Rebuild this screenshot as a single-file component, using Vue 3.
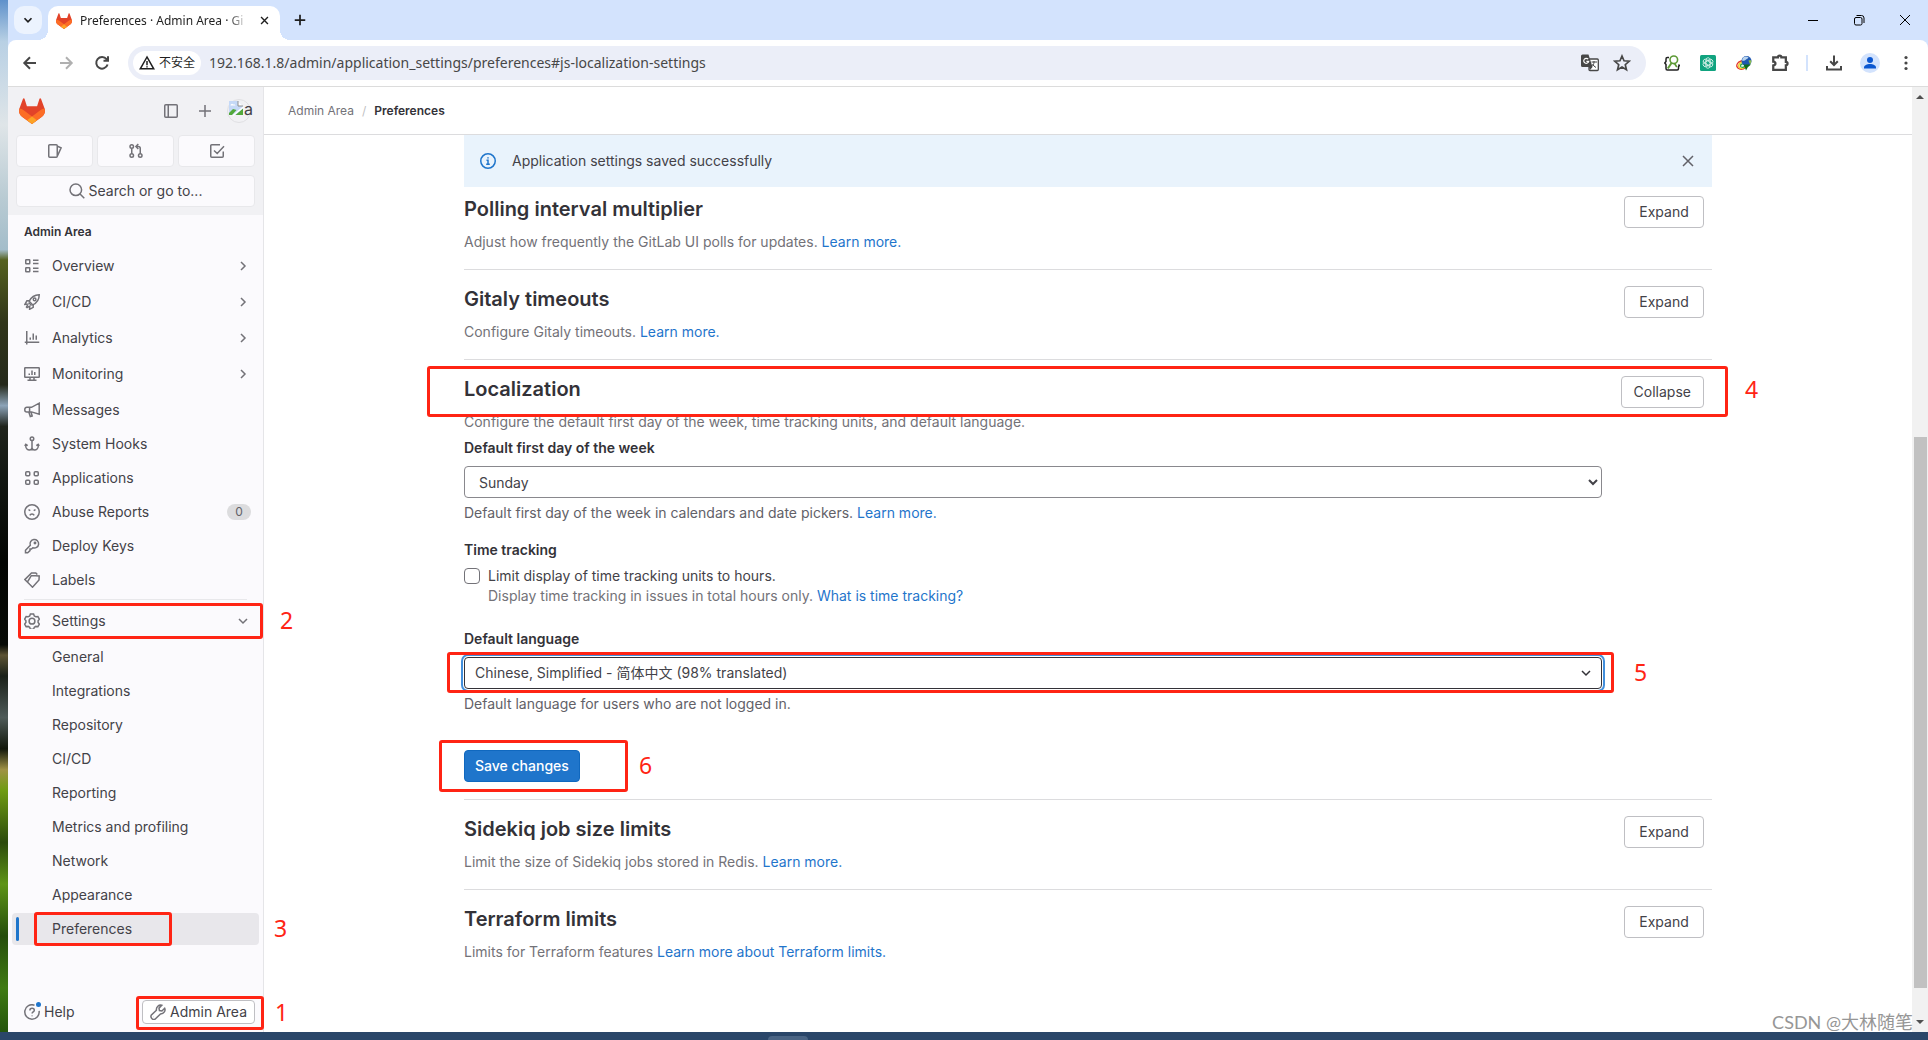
<script setup>
/**
 * Vendor
 */
import { ref } from "vue"

const icons = {
	overview: `<rect x="1.75" y="1.75" width="4" height="4" rx=".5"/><rect x="1.75" y="9.75" width="4" height="4" rx=".5"/><path d="M9 2.25h5.5M9 5.5h5.5M9 10.25h5.5M9 13.5h5.5"/>`,
	rocket: `<path d="M5.2 7.2C7 3.6 10.2 1 15.2.8c.1 5-2.6 8.3-6.4 10.1z"/><circle cx="10.6" cy="5.4" r="1.3"/><path d="M5.4 6.8H2.9L.9 10.4l3.7-.3M9.2 10.8v2.5l-3.6 2 .2-3.8M4.6 8.5l3 3M3.9 10.4l-1.4 2.600.6.6 2.7-1.5"/>`,
	chart: `<path d="M2.75 1v13.5M.75 12.25h14.5M6.25 9.8V7.5M9.25 9.8V3.5M12.25 9.8V5.5"/>`,
	monitor: `<rect x=".75" y="1.75" width="14.5" height="9.5" rx=".5"/><path d="M5.25 9V7.5M8 9V4.5M10.75 9V6M6 11.5v2.2M10 11.5v2.2M3.5 14.25h9"/>`,
	bullhorn: `<path d="M15.2 1.2v11L7.5 9.9H2.8a2 2 0 0 1-2-2v-.6a2 2 0 0 1 2-2h4.7zM5.6 5.4v4.4M4.8 10l1.5 4.5 1.9-.6-1.2-3.8"/>`,
	hook: `<circle cx="8" cy="2.75" r="1.75"/><path d="M8 4.5v10M1.75 8.5v1.6c0 2.4 1.9 3.9 3.6 3.9 1.5 0 2.65-1 2.65-2.5 0 1.5 1.15 2.5 2.65 2.5 1.7 0 3.6-1.5 3.6-3.9V8.5M.8 10l1-1.7 1.9 1.4M15.2 10l-1-1.7-1.9 1.4"/>`,
	apps: `<rect x="1.75" y="1.75" width="4" height="4" rx="1"/><rect x="10.25" y="1.75" width="4" height="4" rx="1"/><rect x="1.75" y="10.25" width="4" height="4" rx="1"/><rect x="10.25" y="10.25" width="4" height="4" rx="1"/>`,
	sad: `<circle cx="8" cy="8" r="7.25"/><path d="M5.8 11.3c.9-1.7 3.5-1.7 4.4 0M4.5 5.7l1.8.9M11.5 5.7l-1.8.9"/>`,
	key: `<path d="M6.3 7.3a4.3 4.3 0 1 1 2.5 2.5L7.5 11H6v1.6l-2.3 2.1H1.5v-2.5z"/><circle cx="11" cy="5" r=".7"/>`,
	labels: `<path d="M7.3 3.7h4.2l3.7.3-.2 4-6.5 7.2L3.4 10zM5.6 12.2.8 7.6 7.5.9h4.3l1.5 1.6M11.9 6.8h.1"/>`,
	settings: `<path d="M6.4 1h3.2l.7 1.9 1.6.9 2-.3 1.4 2.600-1.200 1.600v1.800l1.200 1.600-1.400 2.600-2-.3-1.600.9-.7 1.900H6.400l-.7-1.900-1.600-.9-2 .3L.7 11.100l1.200-1.600V7.700L.7 6.100l1.400-2.600 2 .3 1.600-.9z"/><circle cx="8" cy="8.200" r="2.900"/>`,
	help: `<path d="M10.5 1.2A7.2 7.2 0 1 0 15.1 6.8M5.9 6.4c0-1.3 1-2.1 2.2-2.1s2.2.8 2.2 2c0 1.6-2.2 1.7-2.2 3.3M8.1 11.4v.9"/>`,
	wrench: `<path d="M11.8 1.3 9 4.1l.4 2.5 2.5.4 2.8-2.8c1 2.3-.5 5.8-4.2 5.8L5 15.2c-1.6 1.3-5-1.2-3.8-3.9L6.4 6.2c-.4-3.3 2.4-5.7 5.4-4.9zM3.3 12.7h.2"/>`,
	panel: `<rect x="1.75" y="1.75" width="12.5" height="12.5" rx="1"/><path d="M5.25 2v12"/>`,
	plus: `<path d="M8 2v12M2 8h12"/>`,
	issues: `<path d="M2.75 1.75h6.5a1 1 0 0 1 1 1v10.5a1 1 0 0 1-1 1h-6.5a1 1 0 0 1-1-1V2.75a1 1 0 0 1 1-1zM10.5 3.3l3.6 1.5-3.8 8.5"/>`,
	merge: `<circle cx="3.75" cy="3.5" r="1.75"/><circle cx="3.75" cy="12.5" r="1.75"/><circle cx="12.25" cy="12.5" r="1.75"/><path d="M3.75 5.3v5.4M12.25 10.7V5.5a2 2 0 0 0-2-2H8.5M10.3 1 7.9 3.5l2.4 2.5"/>`,
	todo: `<path d="M14.25 8.5v4.7a1 1 0 0 1-1 1H2.75a1 1 0 0 1-1-1V2.75a1 1 0 0 1 1-1H11M5 7.5l3.2 3L15 3.3"/>`,
	search: `<circle cx="6.8" cy="6.8" r="5.8"/><path d="m11 11 4.3 4.3"/>`,
	right: `<path d="m6 4 4 4-4 4"/>`,
	down: `<path d="m4 6 4 4 4-4"/>`,
	close: `<path d="m3 3 10 10M13 3 3 13"/>`,
	info: `<circle cx="8" cy="8" r="7.25"/><path d="M6.5 7.25H8v4M6.2 11.25h3.6M8 4.2v1.3"/>`,
	back: `<path d="M14 8H2.5M8 2.3 2.3 8 8 13.7"/>`,
	forward: `<path d="M2 8h11.5M8 2.3 13.7 8 8 13.7"/>`,
	reload: `<path d="M13.6 9.5A5.8 5.8 0 1 1 12.6 4.2L14 5.6M14 1.3v4.5H9.5"/>`,
	warning: `<path d="M8 2 1.3 13.8h13.4zM8 6v4.2M8 11.3v1.2"/>`,
	star: `<path d="m8 1.8 1.8 4.2 4.7.4-3.6 3.1 1.1 4.5L8 11.6 4 14l1.1-4.5L1.5 6.4 6.2 6z"/>`,
	puzzle: `<path d="M2 3h4.200c0-2 3-2 3 0H13.200v4c2 0 2 3 0 3v4.200H2v-4c2.600-.3 2.600-3.100 0-3.400z"/>`,
	download: `<path d="M8 .5v9M4.2 6.2 8 10l3.8-3.8M1 11v3.5h14V11"/>`,
}

const menu = [
	{ text: "Overview", icon: "overview", group: true },
	{ text: "CI/CD", icon: "rocket", group: true },
	{ text: "Analytics", icon: "chart", group: true },
	{ text: "Monitoring", icon: "monitor", group: true },
	{ text: "Messages", icon: "bullhorn" },
	{ text: "System Hooks", icon: "hook" },
	{ text: "Applications", icon: "apps" },
	{ text: "Abuse Reports", icon: "sad", count: "0" },
	{ text: "Deploy Keys", icon: "key" },
	{ text: "Labels", icon: "labels" },
]

const settings = [
	"General",
	"Integrations",
	"Repository",
	"CI/CD",
	"Reporting",
	"Metrics and profiling",
	"Network",
	"Appearance",
	"Preferences",
]

const sectionsBefore = [
	{
		title: "Polling interval multiplier",
		text: "Adjust how frequently the GitLab UI polls for updates.",
		link: "Learn more.",
	},
	{ title: "Gitaly timeouts", text: "Configure Gitaly timeouts.", link: "Learn more." },
]

const sectionsAfter = [
	{
		title: "Sidekiq job size limits",
		text: "Limit the size of Sidekiq jobs stored in Redis.",
		link: "Learn more.",
	},
	{
		title: "Terraform limits",
		text: "Limits for Terraform features",
		link: "Learn more about Terraform limits.",
	},
]

const url = ref("192.168.1.8/admin/application_settings/preferences#js-localization-settings")
const weekday = ref("Sunday")
const language = ref("zh_CN")
const hoursOnly = ref(false)
</script>

<template>
	<div class="desktop">
		<div class="window">
			<div class="tabs">
				<button class="tab_search" aria-label="Search tabs">
					<svg class="icon" viewBox="0 0 16 16" v-html="icons.down" />
				</button>

				<div class="tab">
					<svg class="favicon" viewBox="0 0 24 24">
						<path fill="#e24329" d="m23.600 9.600-3.300-8.800c-.3-.7-1.200-.6-1.400 0L16.700 7.600H7.300L5.100.8C4.900.2 4 .1 3.700.8L.4 9.600c-1 2.900 0 6 2.400 7.800L12 24l9.200-6.600c2.400-1.800 3.400-4.900 2.400-7.800z" />
						<path fill="#fc6d26" d="M23.600 9.600c-1.700.3-3.300 1.100-4.600 2.100L12 17l-7-5.300C3.700 10.700 2.100 9.900.4 9.600c-1 2.900 0 6 2.400 7.800L12 24l9.200-6.600c2.400-1.800 3.400-4.900 2.400-7.800z" />
						<path fill="#fca326" d="m7.500 20.500 4.500 3.400 4.500-3.400L12 17z" />
					</svg>
					<span class="tab_title">Preferences · Admin Area · Gi</span>
					<button class="tab_close" aria-label="Close tab">
						<svg class="icon" viewBox="0 0 16 16" v-html="icons.close" />
					</button>
				</div>

				<button class="tab_new" aria-label="New tab">
					<svg class="icon" viewBox="0 0 16 16" v-html="icons.plus" />
				</button>

				<div class="window_controls">
					<button aria-label="Minimize">
						<svg viewBox="0 0 12 12"><path d="M1 6.500h10" /></svg>
					</button>
					<button aria-label="Restore">
						<svg viewBox="0 0 12 12">
							<rect x="1.500" y="3.500" width="7.500" height="7.500" rx="1.500" />
							<path d="M3.500 1.500h5a2.500 2.500 0 0 1 2.500 2.500v5" />
						</svg>
					</button>
					<button aria-label="Close">
						<svg viewBox="0 0 12 12"><path d="m1 1 10 10M11 1 1 11" /></svg>
					</button>
				</div>
			</div>

			<div class="toolbar">
				<button aria-label="Back"><svg class="icon bold" viewBox="0 0 16 16" v-html="icons.back" /></button>
				<button class="disabled" aria-label="Forward">
					<svg class="icon bold" viewBox="0 0 16 16" v-html="icons.forward" />
				</button>
				<button aria-label="Reload"><svg class="icon bold" viewBox="0 0 16 16" v-html="icons.reload" /></button>

				<div class="omnibox">
					<button class="chip">
						<svg class="icon" viewBox="0 0 16 16" v-html="icons.warning" />
						不安全
					</button>
					<input v-model="url" class="url" type="text" aria-label="Address" />
					<button class="translate" aria-label="Translate">
						<svg class="glyph" viewBox="0 0 18 18">
							<rect x="8" y="5" width="9.300" height="11.500" rx="1" fill="#fff" stroke="#474747" stroke-width="1.300" />
							<path d="M1.500.5h6L11.500 13h-10A1.500 1.500 0 0 1 0 11.500V2A1.500 1.500 0 0 1 1.500.5z" fill="#474747" />
							<path d="M8 13h3.500L9 16z" fill="#474747" />
							<path d="M7.200 5.200a2.500 2.500 0 1 0 .5 2.200H5.400" fill="none" stroke="#fff" stroke-width="1.200" />
							<path d="M10.500 8h5.500M13 7v1c0 2-1 3.500-2.200 4.500M11.500 10c.8 1.500 2 2.800 3.500 3.500" fill="none" stroke="#474747" />
						</svg>
					</button>
					<button aria-label="Bookmark"><svg class="icon glyph" viewBox="0 0 16 16" v-html="icons.star" /></button>
				</div>

				<div class="extensions">
					<button aria-label="Page search">
						<svg class="small_glyph" viewBox="0 0 16 16" fill="none">
							<path d="M5 2.500H3.300c-1 0-1.300.5-1.300 1.500v2.500L.8 8 2 9.500v4c0 1 .4 1.500 1.300 1.500h9.900c1 0 1.300-.5 1.300-1.500v-2l1-.8-1-1.200" stroke="#222" stroke-width="1.500" />
							<circle cx="9.800" cy="4.800" r="3.800" fill="#fff" stroke="#5d9a36" stroke-width="1.600" />
							<path d="M7.500 8 3.800 13.500" stroke="#5d9a36" stroke-width="2" />
							<path d="M10.500 8.500 12.800 12" stroke="#5d9a36" stroke-width="1.600" />
						</svg>
					</button>
					<button aria-label="Assistant">
						<svg class="small_glyph" viewBox="0 0 16 16" fill="none" stroke="#e6f6f1" stroke-width=".8">
							<rect width="16" height="16" rx="1.500" fill="#10a37f" stroke="none" />
							<g v-for="n in 6" :key="n" :transform="`rotate(${n * 60} 8 8)`">
								<path d="M5.700 9.300V5.200a2.400 2.400 0 0 1 4.500-1.200M8 6.600l3.200-1.800" />
							</g>
						</svg>
					</button>
					<button aria-label="Download manager">
						<svg class="small_glyph" viewBox="0 0 16 16" fill="none">
							<ellipse cx="6" cy="10" rx="5.300" ry="4" transform="rotate(-20 6 10)" stroke="#e23a2e" stroke-width="1.400" />
							<ellipse cx="6.500" cy="10.200" rx="4" ry="2.900" transform="rotate(-20 6.500 10.200)" stroke="#f2d22b" stroke-width="1.400" />
							<ellipse cx="7" cy="10.500" rx="2.600" ry="1.700" transform="rotate(-20 7 10.500)" fill="#dff0ff" stroke="#35a845" stroke-width="1.200" />
							<circle cx="10.500" cy="6" r="5" fill="#2058b0" />
							<path d="M7.500 2.200c2-1.200 4-.8 5 .3-.5 1.500-2 1.300-2.800 2.200S7.500 6.200 6 5.500c.2-1.300.7-2.500 1.500-3.300z" fill="#b9d4ee" />
							<path d="M12.500 5.500c1-.5 2-.3 2.900 0 0 1.500-.5 2.700-1.400 3.700z" fill="#8fbf4d" />
							<path d="M7.500 9.500H15l-3.200 2.700L10 15.500l-.8-2.300z" fill="#136b1c" />
						</svg>
					</button>
					<button aria-label="Extensions"><svg class="icon glyph bold" viewBox="0 0 16 16" v-html="icons.puzzle" /></button>
				</div>

				<div class="divider" />

				<div class="extensions">
					<button aria-label="Downloads"><svg class="icon bold" viewBox="0 0 16 16" v-html="icons.download" /></button>
					<button aria-label="Profile">
						<svg class="profile" viewBox="0 0 20 20">
							<circle cx="10" cy="10" r="10" fill="#d3e3fd" />
							<circle cx="10" cy="7" r="3" fill="#0b57d0" />
							<path d="M4 15.500v-1c0-2 3-3.500 6-3.500s6 1.500 6 3.500v1z" fill="#0b57d0" />
						</svg>
					</button>
					<button aria-label="Menu">
						<svg class="small_glyph" viewBox="0 0 16 16" fill="#474747">
							<circle cx="8" cy="2.500" r="1.600" />
							<circle cx="8" cy="8" r="1.600" />
							<circle cx="8" cy="13.500" r="1.600" />
						</svg>
					</button>
				</div>
			</div>

			<div class="page">
				<aside class="sidebar">
					<div class="top">
						<div class="brand">
							<a href="#" aria-label="Home">
								<svg class="logo" viewBox="0 0 24 24">
									<path fill="#e24329" d="m23.600 9.600-3.300-8.800c-.3-.7-1.200-.6-1.400 0L16.700 7.600H7.300L5.100.8C4.900.2 4 .1 3.700.8L.4 9.600c-1 2.900 0 6 2.400 7.800L12 24l9.200-6.600c2.400-1.800 3.400-4.900 2.400-7.800z" />
									<path fill="#fc6d26" d="M23.600 9.600c-1.700.3-3.300 1.100-4.600 2.100L12 17l-7-5.300C3.700 10.700 2.100 9.900.4 9.600c-1 2.900 0 6 2.400 7.800L12 24l9.200-6.600c2.400-1.800 3.400-4.900 2.400-7.800z" />
									<path fill="#fca326" d="m7.500 20.500 4.500 3.400 4.500-3.400L12 17z" />
								</svg>
							</a>
							<button class="push" aria-label="Toggle sidebar">
								<svg class="icon" viewBox="0 0 16 16" v-html="icons.panel" />
							</button>
							<button aria-label="Create new"><svg class="icon" viewBox="0 0 16 16" v-html="icons.plus" /></button>
							<button class="avatar" aria-label="User menu">
								<svg viewBox="0 0 16 16">
									<path d="M1 1h9l5 5v9H1z" fill="#c5d9f7" />
									<path d="M10 1v5h5" fill="#fff" stroke="#8f8f8f" />
									<path d="M2.500 5.500a1.500 1.500 0 0 1 2.700-1 1.500 1.500 0 0 1 2.300 1z" fill="#fff" />
									<path d="M1 15v-2l4-4 3.500 1L4 15z" fill="#52a83b" />
									<path d="m7.500 15 7.500-6.500V15z" fill="#52a83b" />
									<path d="M5 15.500 15.500 7" stroke="#fff" stroke-width="1.500" />
								</svg>
								<span>a</span>
							</button>
						</div>

						<div class="shortcuts">
							<button aria-label="Issues"><svg class="icon" viewBox="0 0 16 16" v-html="icons.issues" /></button>
							<button aria-label="Merge requests"><svg class="icon" viewBox="0 0 16 16" v-html="icons.merge" /></button>
							<button aria-label="To-Do List"><svg class="icon" viewBox="0 0 16 16" v-html="icons.todo" /></button>
						</div>

						<button class="search">
							<svg class="icon" viewBox="0 0 16 16" v-html="icons.search" />
							Search or go to...
						</button>
					</div>

					<nav class="nav">
						<div class="nav_title">Admin Area</div>

						<a v-for="item in menu" :key="item.text" href="#" :class="['row', item.group && 'group']">
							<svg class="icon" viewBox="0 0 16 16" v-html="icons[item.icon]" />
							<span>{{ item.text }}</span>
							<svg v-if="item.group" class="icon chevron" viewBox="0 0 16 16" v-html="icons.right" />
							<span v-if="item.count" class="count">{{ item.count }}</span>
						</a>

						<hr />

						<a href="#" class="row group">
							<svg class="icon" viewBox="0 0 16 16" v-html="icons.settings" />
							<span>Settings</span>
							<svg class="icon chevron" viewBox="0 0 16 16" v-html="icons.down" />
							<span class="mark mark_settings"><b>2</b></span>
						</a>

						<a
							v-for="item in settings"
							:key="item"
							href="#"
							:class="['row', 'nested', item === 'Preferences' && 'active']"
						>
							<span>{{ item }}</span>
							<span v-if="item === 'Preferences'" class="mark mark_preferences"><b>3</b></span>
						</a>
					</nav>

					<div class="footer">
						<button class="help">
							<svg class="icon" viewBox="0 0 16 16" v-html="icons.help" />
							Help
							<i />
						</button>
						<a href="#" class="admin">
							<svg class="icon" viewBox="0 0 16 16" v-html="icons.wrench" />
							Admin Area
							<span class="mark mark_admin"><b>1</b></span>
						</a>
					</div>
				</aside>

				<main class="main">
					<div class="breadcrumbs">
						<a href="#">Admin Area</a>
						<span>/</span>
						<a href="#" class="current">Preferences</a>
					</div>

					<div class="container">
						<div class="alert">
							<svg class="icon" viewBox="0 0 16 16" v-html="icons.info" />
							Application settings saved successfully
							<button aria-label="Dismiss"><svg class="icon" viewBox="0 0 16 16" v-html="icons.close" /></button>
						</div>

						<section v-for="item in sectionsBefore" :key="item.title" class="section">
							<div class="head">
								<h2>{{ item.title }}</h2>
								<button class="btn">Expand</button>
							</div>
							<p>{{ item.text }} <a href="#">{{ item.link }}</a></p>
						</section>

						<section class="section">
							<div class="head">
								<h2>Localization</h2>
								<button class="btn">Collapse</button>
								<span class="mark mark_localization"><b>4</b></span>
							</div>
							<p>Configure the default first day of the week, time tracking units, and default language.</p>

							<form class="form" @submit.prevent>
								<label class="label" for="weekday">Default first day of the week</label>
								<select id="weekday" v-model="weekday" class="select">
									<option>Sunday</option>
									<option>Monday</option>
									<option>Saturday</option>
								</select>
								<p class="hint">
									Default first day of the week in calendars and date pickers. <a href="#">Learn more.</a>
								</p>

								<div class="label tracking">Time tracking</div>
								<div class="check">
									<input id="hours" v-model="hoursOnly" type="checkbox" />
									<label for="hours">Limit display of time tracking units to hours.</label>
								</div>
								<p class="check_hint">
									Display time tracking in issues in total hours only. <a href="#">What is time tracking?</a>
								</p>

								<label class="label language_label" for="language">Default language</label>
								<div class="language">
									<select id="language" v-model="language" class="select focused">
										<option value="zh_CN">Chinese, Simplified - 简体中文 (98% translated)</option>
										<option value="en">English</option>
									</select>
									<svg class="icon" viewBox="0 0 16 16" v-html="icons.down" />
									<span class="mark mark_language"><b>5</b></span>
								</div>
								<p class="hint">Default language for users who are not logged in.</p>

								<div class="actions">
									<button class="btn confirm">Save changes</button>
									<span class="mark mark_save"><b>6</b></span>
								</div>
							</form>
						</section>

						<section v-for="item in sectionsAfter" :key="item.title" class="section">
							<div class="head">
								<h2>{{ item.title }}</h2>
								<button class="btn">Expand</button>
							</div>
							<p>{{ item.text }} <a href="#">{{ item.link }}</a></p>
						</section>
					</div>
				</main>

				<div class="scrollbar">
					<svg viewBox="0 0 8 4"><path d="M0 4 4 0l4 4z" /></svg>
					<div class="track"><div class="thumb" /></div>
					<svg viewBox="0 0 8 4"><path d="m0 0 4 4 4-4z" /></svg>
				</div>
			</div>
		</div>

		<div class="taskbar"><i /></div>
		<div class="watermark">CSDN @大林随笔</div>
	</div>
</template>

<style>
body {
	margin: 0;
}
</style>

<style scoped>
.desktop {
	--text: #333238;
	--soft: #434248;
	--muted: #737278;
	--link: #1f75cb;
	--red: #ff2414;

	position: relative;
	display: flex;
	flex-direction: column;
	box-sizing: border-box;
	min-height: 100vh;
	padding-left: 8px;

	background: linear-gradient(
		180deg,
		#5f91cb 0,
		#b8d0e4 4%,
		#dfe5e8 12%,
		#b9cbd3 19%,
		#a3bdca 24%,
		#55611f 25%,
		#30351a 31%,
		#25291b 37%,
		#8ca3b8 39%,
		#20241c 41%,
		#121712 46%,
		#030503 54%,
		#070a06 62%,
		#5c5333 63%,
		#1a2019 65%,
		#4e5a58 69%,
		#12170b 72%,
		#a09245 74%,
		#6f9c12 76%,
		#2c4a0c 81%,
		#5d9416 85%,
		#254d0b 90%,
		#3f7b12 95%,
		#1f4d0b 100%
	);

	font-family: Inter, "Noto Sans CJK SC", sans-serif;
	font-size: 14px;
	line-height: 20px;
	color: var(--text);
}

.desktop * {
	box-sizing: border-box;
}

button,
select,
input {
	margin: 0;
	font: inherit;
	color: inherit;
}

button {
	display: flex;
	align-items: center;
	justify-content: center;
	padding: 0;
	border: 0;
	background: none;
}

a {
	color: var(--link);
	text-decoration: none;
}

.icon {
	flex: none;
	width: 16px;
	height: 16px;
	fill: none;
	stroke: currentColor;
	stroke-width: 1.5;
}

.icon.bold {
	stroke-width: 2;
}

.glyph {
	width: 18px;
	height: 18px;
}

.small_glyph {
	width: 16px;
	height: 16px;
}

/* Browser */

.window {
	flex: 1;
	display: flex;
	flex-direction: column;
	background: #d3e3fd;
}

.tabs {
	display: flex;
	height: 40px;
	padding: 6px 0 0 6px;
	font-family: "Noto Sans", "Noto Sans CJK SC", sans-serif;
	font-size: 12px;
	color: #1f1f1f;
}

.tab_search {
	width: 28px;
	height: 28px;
	margin-right: 6px;
	border-radius: 10px;
	background: #ecf3fe;
}

.tab_search .icon {
	width: 14px;
	height: 14px;
	stroke-width: 2;
}

.tab {
	position: relative;
	display: flex;
	align-items: center;
	gap: 8px;
	width: 232px;
	padding: 0 8px 5px;
	border-radius: 10px 10px 0 0;
	background: #fff;
}

.tab::before,
.tab::after {
	content: "";
	position: absolute;
	bottom: 0;
	width: 10px;
	height: 10px;
}

.tab::before {
	right: 100%;
	background: radial-gradient(circle at 0 0, transparent 10px, #fff 10px);
}

.tab::after {
	left: 100%;
	background: radial-gradient(circle at 100% 0, transparent 10px, #fff 10px);
}

.favicon {
	flex: none;
	width: 16px;
	height: 16px;
}

.tab_title {
	flex: 1;
	white-space: nowrap;
	mask-image: linear-gradient(90deg, #000 148px, transparent 168px);
}

.tab_close {
	width: 16px;
	height: 16px;
}

.tab_close .icon {
	width: 11px;
	height: 11px;
	stroke-width: 2;
}

.tab_new {
	width: 28px;
	height: 28px;
	margin-left: 6px;
}

.tab_new .icon {
	width: 14px;
	height: 14px;
	stroke-width: 2;
}

.window_controls {
	display: flex;
	margin-left: auto;
}

.window_controls button {
	width: 46px;
	height: 28px;
}

.window_controls svg {
	width: 12px;
	height: 12px;
	fill: none;
	stroke: #000;
}

.toolbar {
	display: flex;
	align-items: center;
	height: 47px;
	padding: 0 4px;
	border-bottom: 1px solid #dcdcdc;
	border-radius: 8px 8px 0 0;
	background: #fff;
	color: #474747;
}

.toolbar button {
	width: 36px;
	height: 34px;
}

.toolbar .disabled {
	color: #b0b0b0;
}

.omnibox {
	flex: 1;
	display: flex;
	align-items: center;
	height: 34px;
	margin: 0 8px;
	padding: 0 6px 0 5px;
	border-radius: 17px;
	background: #ebeef8;
	font-family: "Noto Sans", "Noto Sans CJK SC", sans-serif;
	font-size: 14px;
}

.omnibox .chip {
	gap: 4px;
	width: 68px;
	height: 24px;
	border-radius: 12px;
	background: #fff;
	font-size: 12px;
	color: #1f1f1f;
}

.url {
	flex: 1;
	min-width: 0;
	padding: 0 0 0 8px;
	border: 0;
	outline: 0;
	background: none;
}

.omnibox .translate {
	width: 28px;
}

.extensions {
	display: flex;
}

.profile {
	width: 20px;
	height: 20px;
}

.divider {
	width: 2px;
	height: 16px;
	margin: 0 8px;
	background: #d3e3fd;
}

/* Page */

.page {
	flex: 1;
	display: flex;
	background: #fff;
}

.sidebar {
	display: flex;
	flex-direction: column;
	width: 256px;
	border-right: 1px solid #e5e5e8;
	background: #fbfafd;
	color: var(--soft);
}

.sidebar .icon {
	color: var(--muted);
}

.sidebar a {
	color: inherit;
}

.top {
	padding: 8px;
	background: #f1f1f4;
}

.brand {
	display: flex;
	align-items: center;
	height: 32px;
	padding: 0 4px 0 3px;
}

.brand a,
.logo {
	display: block;
	width: 26px;
	height: 26px;
}

.brand button {
	width: 28px;
	height: 32px;
}

.brand .push {
	margin-left: auto;
	width: 40px;
}

.brand .avatar {
	align-items: flex-start;
	justify-content: flex-start;
	width: 24px;
	height: 24px;
	margin-left: 8px;
	border: 1px solid #e0e0e3;
	border-radius: 12px;
	font-size: 16px;
	line-height: 18px;
}

.avatar svg {
	flex: none;
	width: 16px;
	height: 16px;
}

.shortcuts {
	display: flex;
	gap: 4px;
	margin: 8px 0;
}

.shortcuts button,
.search {
	flex: 1;
	height: 32px;
	border: 1px solid #e8e8eb;
	border-radius: 4px;
	background: #fbfafd;
}

.search {
	gap: 4px;
	width: 100%;
}

.nav {
	padding: 7px 4px 0;
}

.nav_title {
	padding: 0 12px;
	margin-bottom: 8px;
	font-size: 12px;
	font-weight: 600;
	color: var(--text);
}

.row {
	position: relative;
	display: flex;
	align-items: center;
	gap: 12px;
	height: 32px;
	margin-bottom: 2px;
	padding: 0 8px 0 12px;
	border-radius: 4px;
}

.row.group {
	margin-bottom: 4px;
}

.row.nested {
	padding-left: 40px;
}

.row.active {
	background: #e8e7eb;
}

.row.active::before {
	content: "";
	position: absolute;
	top: 4px;
	bottom: 4px;
	left: 4px;
	width: 3px;
	border-radius: 2px;
	background: var(--link);
}

.chevron {
	margin-left: auto;
}

.count {
	width: 24px;
	margin-left: auto;
	border-radius: 8px;
	background: #dcdcde;
	font-size: 12px;
	line-height: 16px;
	text-align: center;
	color: #626168;
}

.nav hr {
	height: 1px;
	margin: 3px 12px 5px;
	border: 0;
	background: #e8e8eb;
}

.footer {
	display: flex;
	align-items: center;
	justify-content: space-between;
	margin-top: auto;
	padding: 8px 8px 8px 16px;
}

.help {
	position: relative;
	gap: 4px;
}

.help i {
	position: absolute;
	top: 0;
	left: 12px;
	width: 5px;
	height: 5px;
	border-radius: 50%;
	background: var(--link);
}

.admin {
	position: relative;
	display: flex;
	align-items: center;
	gap: 4px;
	height: 24px;
	padding: 0 7px;
	border: 1px solid #bfbfc3;
	border-radius: 4px;
	background: #fff;
}

.main {
	flex: 1;
	min-width: 0;
}

.breadcrumbs {
	display: flex;
	align-items: center;
	gap: 8px;
	height: 48px;
	padding: 0 24px;
	border-bottom: 1px solid #dcdcde;
	font-size: 12px;
	color: #bfbfc3;
}

.breadcrumbs a {
	color: var(--muted);
}

.breadcrumbs .current {
	font-weight: 600;
	color: var(--text);
}

.container {
	max-width: 1280px;
	margin: 0 auto;
	padding: 0 16px;
}

.alert {
	display: flex;
	align-items: center;
	gap: 16px;
	height: 52px;
	padding: 0 16px;
	background: #e9f3fc;
	color: var(--soft);
}

.alert .icon {
	color: var(--link);
}

.alert button {
	margin-left: auto;
}

.alert button .icon {
	color: #626168;
}

.section {
	padding: 16px 0 17px;
	border-top: 1px solid #dcdcde;
}

.alert + .section {
	padding-top: 9px;
	border-top: 0;
}

.head {
	position: relative;
	display: flex;
	align-items: flex-start;
	justify-content: space-between;
	height: 36px;
	padding-right: 8px;
}

h2 {
	margin: 0;
	font-size: 20px;
	line-height: 26px;
	font-weight: 600;
}

p {
	margin: 0;
	color: var(--muted);
}

.btn {
	min-width: 80px;
	height: 32px;
	padding: 0 12px;
	border: 1px solid #bfbfc3;
	border-radius: 4px;
	background: #fff;
	color: var(--soft);
}

.btn.confirm {
	padding: 0 10px;
	border-color: #1068bf;
	background: var(--link);
	font-weight: 500;
	color: #fff;
}

.form {
	margin-top: 6px;
	padding-right: 110px;
}

.label {
	display: block;
	margin-bottom: 8px;
	font-weight: 600;
}

.select {
	display: block;
	width: 100%;
	height: 32px;
	padding: 0 0 0 10px;
	border: 1px solid #89888d;
	border-radius: 4px;
	background: #fff;
	color: var(--soft);
}

.select.focused {
	appearance: none;
	border-color: var(--text);
	outline: 0;
	box-shadow: 0 0 0 1px #fff, 0 0 0 3px #428fdc;
}

.hint {
	margin-top: 5px;
	color: #626168;
}

.tracking {
	margin: 17px 0 6px;
}

.check {
	display: flex;
	align-items: center;
	gap: 8px;
	color: var(--soft);
}

.check input {
	appearance: none;
	width: 16px;
	height: 16px;
	border: 1px solid #737278;
	border-radius: 4px;
	background: #fff;
}

.check_hint {
	padding-left: 24px;
}

.language_label {
	margin-top: 23px;
}

.language {
	position: relative;
}

.language .icon {
	position: absolute;
	top: 8px;
	right: 8px;
}

.actions {
	position: relative;
	margin-top: 36px;
}

.scrollbar {
	display: flex;
	flex-direction: column;
	align-items: center;
	width: 16px;
	padding: 8px 0;
	background: #f1f1f1;
}

.scrollbar svg {
	width: 8px;
	height: 4px;
	fill: #505050;
}

.track {
	flex: 1;
	display: flex;
	flex-direction: column;
	justify-content: flex-end;
	width: 13px;
	padding-bottom: 32px;
}

.thumb {
	height: 62%;
	background: #c1c1c1;
}

/* Numbered steps drawn over the page */

.mark {
	position: absolute;
	z-index: 1;
	display: flex;
	align-items: center;
	border: 3px solid var(--red);
	border-radius: 3px;
	pointer-events: none;
}

.mark b {
	position: absolute;
	left: calc(100% + 20px);
	padding-bottom: 2px;
	font-family: "Noto Sans", sans-serif;
	font-size: 23px;
	font-weight: 400;
	color: var(--red);
}

.mark_settings {
	inset: -2px -4px -2px 6px;
}

.mark_preferences {
	inset: -1px 87px -1px 22px;
}

.mark_preferences b {
	left: calc(100% + 105px);
}

.mark_admin {
	inset: -5px -10px -7px -7px;
}

.mark_admin b {
	left: calc(100% + 14px);
}

.mark_localization {
	inset: -10px -16px -5px -37px;
}

.mark_localization b {
	padding-bottom: 6px;
}

.mark_language {
	inset: -5px -12px -4px -17px;
}

.mark_language b {
	left: calc(100% + 23px);
}

.mark_save {
	top: -10px;
	bottom: -10px;
	left: -25px;
	width: 189px;
}

.mark_save b {
	left: calc(100% + 14px);
}

/* Desktop */

.taskbar {
	height: 8px;
	margin-left: -8px;
	padding: 4px 0 0 40%;
	background: #2a4669;
}

.taskbar i {
	display: block;
	width: 40px;
	height: 4px;
	border-radius: 4px 4px 0 0;
	background: #4a6484;
}

.watermark {
	position: absolute;
	right: 15px;
	bottom: 6px;
	font-family: Lato, "Noto Sans CJK SC", sans-serif;
	font-size: 18px;
	line-height: 24px;
	color: #969696;
}
</style>
